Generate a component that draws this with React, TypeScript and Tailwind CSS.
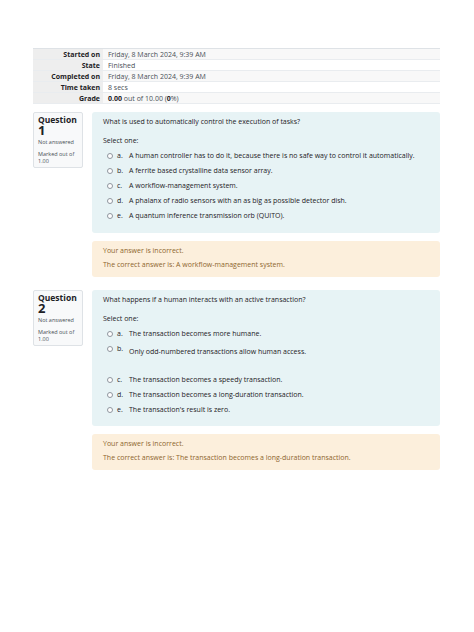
import React from 'react'

const font = { fontFamily: '"Open Sans", "Liberation Sans", sans-serif' }

const summary: [string, React.ReactNode][] = [
    ['Started on', 'Friday, 8 March 2024, 9:39 AM'],
    ['State', 'Finished'],
    ['Completed on', 'Friday, 8 March 2024, 9:39 AM'],
    ['Time taken', '8 secs'],
    ['Grade', <span><b className="font-bold text-[#1d2125]">0.00</b> out of 10.00 (<b className="font-bold text-[#1d2125]">0</b>%)</span>],
]

type Option = { letter: string; text: string; tall?: boolean }

const Radio = () => (
    <span className="mt-[2px] h-[6px] w-[6px] shrink-0 rounded-full border-[0.75px] border-[#8f959e] bg-white" />
)

const InfoBox: React.FC<{ n: number }> = ({ n }) => (
    <div className="w-[50px] h-[56px] shrink-0 rounded-[2px] border-[0.75px] border-[#dee2e6] bg-[#f8f9fa] px-[4px] pt-[2px]">
        <div className="text-[8.5px] leading-[9px] font-bold text-[#1d2125]">Question</div>
        <div className="text-[13px] leading-[13px] font-bold text-[#1d2125]">{n}</div>
        <div className="mt-[2px] text-[5.5px] leading-[7px] text-[#495057]">Not answered</div>
        <div className="mt-[5px] text-[5.5px] leading-[7px] text-[#495057]">Marked out of<br />1.00</div>
    </div>
)

const Question: React.FC<{ n: number; text: string; options: Option[]; correct: string; className?: string }> = ({ n, text, options, correct, className }) => (
    <div className={'flex gap-[9px] ' + (className ?? '')}>
        <InfoBox n={n} />
        <div className="flex flex-1 flex-col">
            <div className="rounded-[3px] bg-[#e7f3f5] pl-[11px] pr-[6px] pt-[5px] pb-[9px]">
                <div className="text-[7px] leading-[10px] text-[#1d2125]">{text}</div>
                <div className="mt-[9px] text-[7px] leading-[10px] text-[#1d2125]">Select one:</div>
                <div className="mt-[2.5px] flex flex-col pl-[4px]">
                    {options.map((o) => (
                        <div key={o.letter} className={'flex items-start ' + (o.tall ? 'h-[31px]' : 'h-[15px]')}>
                            <div className="flex items-start pt-[2.5px]">
                                <Radio />
                                <span className="ml-[4px] w-[12px] text-[7px] leading-[10px] text-[#1d2125]">{o.letter}.</span>
                            </div>
                            <span className={'text-[7px] leading-[10px] text-[#1d2125] ' + (o.tall ? 'pt-[5.5px]' : 'pt-[2.5px]')}>{o.text}</span>
                        </div>
                    ))}
                </div>
            </div>
            <div className="mt-[8px] rounded-[3px] bg-[#fcefdc] pl-[11px] pt-[3px] pb-[5px] text-[7px] leading-[14px] text-[#8e662e]">
                <div>Your answer is incorrect.</div>
                <div>The correct answer is: {correct}</div>
            </div>
        </div>
    </div>
)

const App: React.FC = () => {
    return (
        <div className="min-h-[632px] w-[474px] bg-white pl-[33px] pr-[34px] pt-[48px]" style={font}>
            <div className="flex flex-col border-t-[0.75px] border-[#dee2e6]">
                {summary.map(([label, value], i) => (
                    <div key={label} className={'flex h-[11px] border-b-[0.75px] border-[#e9ecef] ' + (i % 2 === 0 ? 'bg-[#f8f8f8]' : 'bg-white')}>
                        <div className="w-[70px] shrink-0 bg-[#eeeeee] pr-[3px] text-right text-[7px] leading-[11px] font-bold text-[#1d2125]">{label}</div>
                        <div className="pl-[5px] text-[7px] leading-[11px] text-[#495057]">{value}</div>
                    </div>
                ))}
            </div>

            <Question
                className="mt-[8px]"
                n={1}
                text="What is used to automatically control the execution of tasks?"
                options={[
                    { letter: 'a', text: 'A human controller has to do it, because there is no safe way to control it automatically.' },
                    { letter: 'b', text: 'A ferrite based crystalline data sensor array.' },
                    { letter: 'c', text: 'A workflow-management system.' },
                    { letter: 'd', text: 'A phalanx of radio sensors with an as big as possible detector dish.' },
                    { letter: 'e', text: 'A quantum inference transmission orb (QUITO).' },
                ]}
                correct="A workflow-management system."
            />

            <Question
                className="mt-[13px]"
                n={2}
                text="What happens if a human interacts with an active transaction?"
                options={[
                    { letter: 'a', text: 'The transaction becomes more humane.' },
                    { letter: 'b', text: 'Only odd-numbered transactions allow human access.', tall: true },
                    { letter: 'c', text: 'The transaction becomes a speedy transaction.' },
                    { letter: 'd', text: 'The transaction becomes a long-duration transaction.' },
                    { letter: 'e', text: "The transaction's result is zero." },
                ]}
                correct="The transaction becomes a long-duration transaction."
            />
        </div>
    )
}

export default App
